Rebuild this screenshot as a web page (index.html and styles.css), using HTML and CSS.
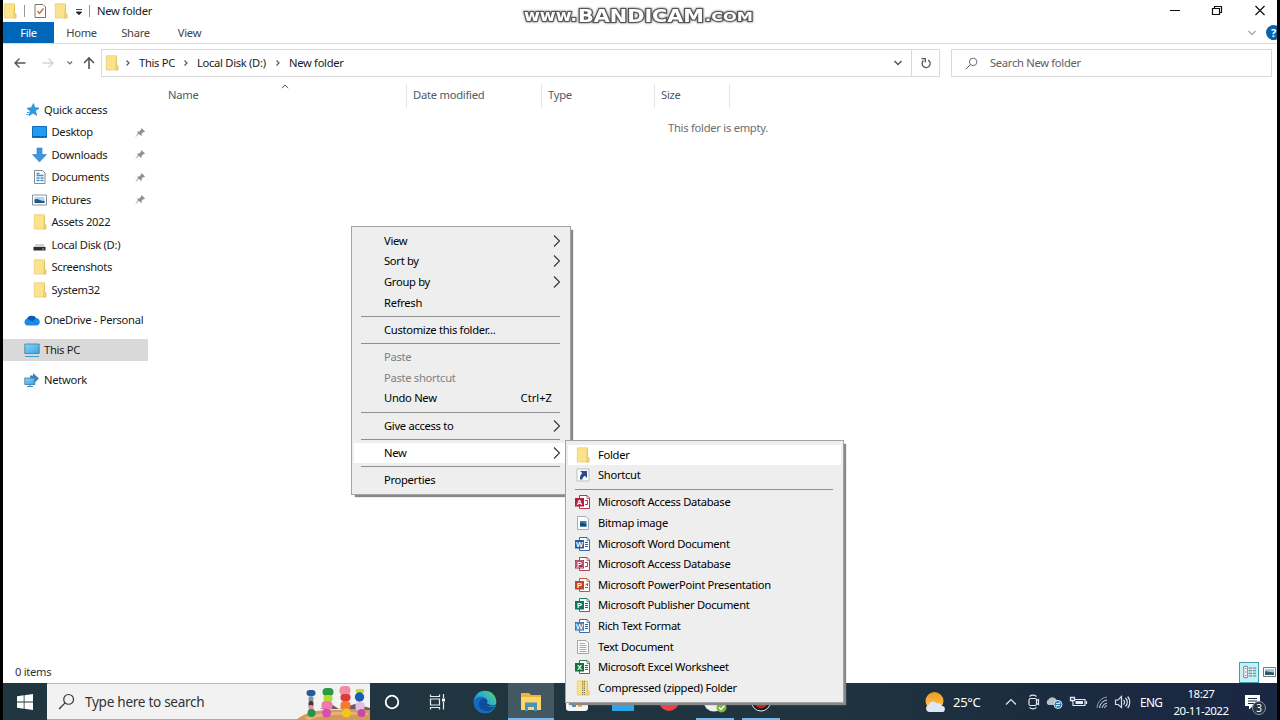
FILE: index.html
```html
<!doctype html>
<html lang="en">
<head>
    <meta charset="UTF-8">
    <meta name="viewport" content="width=device-width, initial-scale=1.0">
    <title>New folder</title>
    <link rel="stylesheet" href="styles.css">
</head>
<body>
<!-- shared icons -->
<svg class="defs">
    <defs>
        <linearGradient id="edge-a" x1="0" y1="1" x2="1" y2="0">
            <stop offset="0" stop-color="#1273c8"/>
            <stop offset=".5" stop-color="#22a5df"/>
            <stop offset="1" stop-color="#5fd96a"/>
        </linearGradient>
        <linearGradient id="sun" x1="0" y1="0" x2="0" y2="1">
            <stop offset="0" stop-color="#f39a1e"/>
            <stop offset="1" stop-color="#fcc95a"/>
        </linearGradient>
        <linearGradient id="screen" x1="0" y1="0" x2="1" y2="1">
            <stop offset="0" stop-color="#8bd4f7"/>
            <stop offset="1" stop-color="#3aa4dd"/>
        </linearGradient>
    </defs>
    <symbol id="folder" viewBox="0 0 16 16">
        <path d="M2.300 .8h10.200v8.700l1.500 1.500v4h-11.700z" fill="#fbe38e" stroke="#e6c968" stroke-width=".7"/>
        <path d="M11.500 15l1-13v8L14 11v4z" fill="#f1d473" stroke="#dfbd55" stroke-width=".5"/>
    </symbol>
    <symbol id="arrow" viewBox="0 0 8 12">
        <path d="M1 .5l5.500 5.500L1 11.500" fill="none" stroke="#333" stroke-width="1.100"/>
    </symbol>
    <symbol id="chev" viewBox="0 0 8 8">
        <path d="M2.500 1.500L5 4 2.500 6.500" fill="none" stroke="#555" stroke-width="1.200"/>
    </symbol>
    <symbol id="down" viewBox="0 0 10 8">
        <path d="M1.500 2L5 5.500 8.500 2" fill="none" stroke="currentColor" stroke-width="1.500"/>
    </symbol>
    <symbol id="pin" viewBox="0 0 12 12">
        <path d="M7 1l4 4-1.200.6-1 .1-1.500 1.700-.2 2.300L5.800 9 4 7.300.8 11l-.2-.3L3.300 6.500 2 5.200l2.600-.4L6.400 3.200z" fill="#8d9196"/>
    </symbol>
    <symbol id="lens" viewBox="0 0 16 16">
        <circle cx="10" cy="6" r="4.600" fill="none" stroke="currentColor" stroke-width="1.100"/>
        <path d="M6.700 9.300L1 15" stroke="currentColor" stroke-width="1.200"/>
    </symbol>
    <symbol id="office" viewBox="0 0 16 16">
        <path d="M4.500 1.500h7.500l2.500 2.500v10.500h-10z" fill="#fff" stroke="currentColor" stroke-width=".9"/>
        <path d="M12 1.500v3h3" fill="none" stroke="currentColor" stroke-width=".6"/>
        <path d="M0 4h9v8.500H0z" fill="currentColor"/>
    </symbol>
    <symbol id="lines" viewBox="0 0 16 16">
        <path d="M10 6.500h3M10 8.500h3M10 10.500h3" stroke="currentColor"/>
    </symbol>
    <symbol id="db" viewBox="0 0 16 16">
        <path d="M10 6.500h2.500v4H10" fill="none" stroke="currentColor" stroke-width=".9"/>
    </symbol>
</svg>

<div class="desktop">
    <div class="window">
        <div class="titlebar">
            <svg class="i16"><use href="#folder"/></svg>
            <span class="bar"></span>
            <svg class="i16 check" viewBox="0 0 16 16">
                <path d="M3 1.500h8l2.500 2.500v10.500H3z" fill="#fff" stroke="#777"/>
                <path d="M5.500 8l2 2.500 4-5" fill="none" stroke="#d2692c" stroke-width="1.400"/>
            </svg>
            <svg class="i16"><use href="#folder"/></svg>
            <svg class="drop" viewBox="0 0 8 8"><path d="M1 1.500h6M1.200 4h5.600L4 6.800z" fill="#222" stroke="#222" stroke-width=".8"/></svg>
            <span class="bar"></span>
            <span class="title">New folder</span>
            <svg class="controls" viewBox="0 0 100 16">
                <path d="M5 8.500h10" stroke="#111"/>
                <path d="M47.500 6.500h7v6h-7zM49.500 6V4.500h7v6H55" fill="none" stroke="#111" stroke-width="1.200"/>
                <path d="M90.500 4l9 9M99.500 4l-9 9" stroke="#111" stroke-width="1.200"/>
            </svg>
        </div>

        <div class="ribbon">
            <span class="tab file">File</span>
            <span class="tab">Home</span>
            <span class="tab">Share</span>
            <span class="tab">View</span>
            <svg class="collapse"><use href="#down"/></svg>
            <span class="help">?</span>
        </div>

        <div class="nav">
            <svg class="nav-arrows" viewBox="0 0 84 16">
                <path d="M12.500 8H2M6.500 3.500L2 8l4.500 4.500" fill="none" stroke="#555" stroke-width="1.400"/>
                <path d="M29.500 8H40M35.500 3.500L40 8l-4.500 4.500" fill="none" stroke="#d4d4d4" stroke-width="1.300"/>
                <path d="M54.500 6.500l2.300 2.300 2.300-2.300" fill="none" stroke="#666" stroke-width="1.200"/>
                <path d="M76 14V3M71 8l5-5 5 5" fill="none" stroke="#555" stroke-width="1.600"/>
            </svg>
            <div class="address">
                <svg class="i16"><use href="#folder"/></svg>
                <svg class="sep"><use href="#chev"/></svg>
                <span class="crumb pc">This PC</span>
                <svg class="sep"><use href="#chev"/></svg>
                <span class="crumb disk">Local Disk (D:)</span>
                <svg class="sep"><use href="#chev"/></svg>
                <span class="crumb">New folder</span>
                <svg class="more"><use href="#down"/></svg>
                <div class="refresh">
                    <svg viewBox="0 0 14 14"><path d="M9.500 3.600A4.700 4.700 0 1 1 4 4.200M1.800 2h4.400v4.400" fill="none" stroke="#555" stroke-width="1.500"/></svg>
                </div>
            </div>
            <div class="search">
                <svg><use href="#lens"/></svg>
                <span>Search New folder</span>
            </div>
        </div>

        <div class="main">
            <div class="sidebar">
                <div class="group">
                    <div class="item root">
                        <svg viewBox="0 0 16 16"><path d="M9.500 1.500l1.300 4.200 4.200.3-3.500 2.800 1.200 4.700-3.700-2.500-4 2.800 1.300-4.900L3 6.300l4.200-.6z" fill="#2b9be8" stroke="#1879c4" stroke-width=".6"/><path d="M3 10.500h2M2.500 12.500h2" stroke="#2b9be8"/></svg>
                        <span>Quick access</span>
                    </div>
                    <div class="item">
                        <svg viewBox="0 0 16 16"><path d="M.5 2.500h14v11H.5z" fill="#1f9df5" stroke="#0f6db9"/><path d="M.5 12.500h14" stroke="#0b4f8e" stroke-dasharray="2 1"/></svg>
                        <span>Desktop</span><svg class="pin"><use href="#pin"/></svg>
                    </div>
                    <div class="item">
                        <svg viewBox="0 0 16 16"><path d="M5 1h5v6.500h4.500l-7 7.500-7-7.500H5z" fill="#3c97e2" stroke="#2b7cc4" stroke-width=".6"/></svg>
                        <span>Downloads</span><svg class="pin"><use href="#pin"/></svg>
                    </div>
                    <div class="item">
                        <svg viewBox="0 0 16 16"><path d="M2.500 1.500h8l2.500 2.500v10.500H2.500z" fill="#fff" stroke="#83898f"/><path d="M4.500 4.500h3M4.500 6.500h7M4.500 9h3M8.500 9h3M4.500 11.500h3M8.500 11.500h3" stroke="#3c8fcc" stroke-width="1.300"/></svg>
                        <span>Documents</span><svg class="pin"><use href="#pin"/></svg>
                    </div>
                    <div class="item">
                        <svg viewBox="0 0 16 16"><path d="M.5 3h14v10H.5z" fill="#fff" stroke="#8a9299"/><path d="M2.500 5h10v6h-10z" fill="#a9d8f5"/><path d="M2.500 7.500c3-2 5 1.500 10 1.500v2h-10z" fill="#23597f"/></svg>
                        <span>Pictures</span><svg class="pin"><use href="#pin"/></svg>
                    </div>
                    <div class="item"><svg><use href="#folder"/></svg><span>Assets 2022</span></div>
                    <div class="item">
                        <svg viewBox="0 0 16 16"><path d="M4 7h7.500l2 3.500h-12z" fill="#d2d2d2"/><path d="M1.500 10h12v3.500h-12z" fill="#2c2c2c"/><path d="M10 12h2" stroke="#8fd36c"/></svg>
                        <span>Local Disk (D:)</span>
                    </div>
                    <div class="item"><svg><use href="#folder"/></svg><span>Screenshots</span></div>
                    <div class="item"><svg><use href="#folder"/></svg><span>System32</span></div>
                </div>
                <div class="group">
                    <div class="item root">
                        <svg viewBox="0 0 16 16"><path d="M3.500 13.500a3.600 3.600 0 0 1-.5-7A5.200 5.200 0 0 1 12 6a3.800 3.800 0 0 1 .8 7.500z" fill="#1a8ae4"/><path d="M3 6.500A5.200 5.200 0 0 1 12 6L8.500 9.500z" fill="#0a5cb3"/></svg>
                        <span>OneDrive - Personal</span>
                    </div>
                </div>
                <div class="group">
                    <div class="item root selected">
                        <svg viewBox="0 0 16 16"><path d="M.8 2h14.400v9.500H.8z" fill="url(#screen)" stroke="#3d7ea6" stroke-width=".8"/><path d="M1 14.500h14" stroke="#3d9bd0"/></svg>
                        <span>This PC</span>
                    </div>
                </div>
                <div class="group">
                    <div class="item root">
                        <svg viewBox="0 0 16 16"><path d="M6 5V3.500h3V1l6 5.500-6 5.500z" fill="#3f86b5"/><path d="M.8 6h10v6.500H.8z" fill="url(#screen)" stroke="#2f78a8" stroke-width=".8"/><path d="M3 14.500h6M6 12.500v2" stroke="#4388b2"/></svg>
                        <span>Network</span>
                    </div>
                </div>
            </div>
            <div class="files">
                <div class="columns">
                    <div class="col name">Name<svg class="sort" viewBox="0 0 8 5"><path d="M.8 4L4 1l3.200 3" fill="none" stroke="#555"/></svg></div>
                    <div class="col date">Date modified</div>
                    <div class="col type">Type</div>
                    <div class="col size">Size</div>
                </div>
                <p class="empty">This folder is empty.</p>
            </div>
        </div>

        <div class="status">
            <span>0 items</span>
            <div class="view-btn">
                <svg viewBox="0 0 16 16"><path d="M1.500 1.500h4v13h-4z" fill="#fff" stroke="#678"/><path d="M3 4h1M3 8h1M3 12h1" stroke="#356"/><path d="M7 3.500h4M12 3.500h3.500M7 6.500h4M12 6.500h3.500M7 9.500h4M12 9.500h3.500M7 12.500h4M12 12.500h3.500" stroke="#567"/></svg>
            </div>
            <svg class="thumbs" viewBox="0 0 13 11"><path d="M.5.5h12v9H.5z" fill="#fff" stroke="#777"/><path d="M2 2h9v6H2z" fill="#9ccbe4"/><path d="M2 4.500c3-1 5 1 9 1V8H2z" fill="#2d586f"/></svg>
        </div>
    </div>

    <div class="taskbar">
        <div class="start">
            <svg viewBox="0 0 16 16"><path d="M0 2.300l6.700-1v6.300H0zM7.500 1.200L16 0v7.600H7.500zM0 8.400h6.700v6.300l-6.700-1zM7.500 8.400H16V16l-8.500-1.200z" fill="#fff"/></svg>
        </div>
        <div class="task-search">
            <svg class="lens"><use href="#lens"/></svg>
            <span>Type here to search</span>
            <!-- daily doodle -->
            <svg class="doodle" viewBox="0 0 74 37">
                <path d="M0 37c5-4 12-8 20-9 14-2 36-1 54-2v11z" fill="#d39a5c"/>
                <path d="M24 26l11-5 8 5zM43 26l16-5 15 4v2z" fill="#6b5a68"/>
                <path d="M8 35c18-8 44-6 64-5v2c-22-1-44-1-59 5z" fill="#e5b577"/>
                <g transform="translate(3.500 0)">
                    <rect x="7" y="7" width="9" height="6" rx="3" fill="#245a9c"/>
                    <rect x="9" y="13" width="5" height="6" rx="2" fill="#8695a5"/>
                    <rect x="9" y="18" width="5" height="6" rx="2" fill="#49373f"/>
                    <rect x="9" y="22" width="5" height="6" rx="2" fill="#e98d9d"/>
                    <circle cx="12" cy="30" r="4" fill="#27924c"/>
                    <rect x="23" y="5" width="11" height="8" rx="4" fill="#289b43"/>
                    <rect x="24" y="12" width="9" height="7" rx="3" fill="#b5d832"/>
                    <rect x="22" y="18" width="11" height="9" rx="4" fill="#ef7cae"/>
                    <circle cx="27" cy="30" r="4.500" fill="#d84fb1"/>
                    <rect x="40" y="3" width="11" height="9" rx="4" fill="#f18da0"/>
                    <rect x="41" y="11" width="10" height="7" rx="3" fill="#d63d3c"/>
                    <rect x="41" y="18" width="10" height="9" rx="4" fill="#f47a2c"/>
                    <circle cx="47" cy="30" r="4.500" fill="#f0c61f"/>
                    <rect x="56" y="6" width="9" height="4" rx="2" fill="#c4d83c"/>
                    <circle cx="60" cy="14" r="4.700" fill="#175fae"/>
                    <rect x="56" y="19" width="9" height="9" rx="3" fill="#e7bddf"/>
                    <circle cx="62" cy="30" r="4" fill="#c747af"/>
                </g>
            </svg>
        </div>
        <div class="apps">
            <div class="app"><svg viewBox="0 0 24 24"><circle cx="11" cy="12" r="6.300" fill="none" stroke="#fff" stroke-width="1.800"/></svg></div>
            <div class="app"><svg viewBox="0 0 24 24"><path d="M3.500 4.500v2h9v-2M3.500 19.500v-2h9v2M3.500 9h9v6h-9zM16.500 4v4M16.500 12v7.500" fill="none" stroke="#e8edef" stroke-width="1.200"/><path d="M15 8.500h3v3h-3z" fill="#fff"/></svg></div>
            <div class="app">
                <svg viewBox="0 0 24 24">
                    <circle cx="12" cy="12" r="11.300" fill="url(#edge-a)"/>
                    <path d="M.8 11C3 5.500 13 5 14.500 11c.3 1.500-1.200 2-1 3.500.5 3 6 3.500 9 1.500A11.300 11.300 0 0 1 .8 11z" fill="#1669bd"/>
                    <path d="M6 14c0-4 3-6 6.500-5 2.500 1 2 3 1 4-.7 3 3.500 5 8.500 3.500-3 5-8 5-11 4-3-1-5-3-5-6.500z" fill="#0e4b9c"/>
                    <path d="M13.500 13c-.5 3 5 4.500 9 2.500l1.500-2c-2.500 2.500-6 2.500-8 1z" fill="#22383f"/>
                </svg>
            </div>
            <div class="app active">
                <svg viewBox="0 0 24 24"><path d="M2 4h8l2 2h10v15H2z" fill="#eeb43a"/><path d="M2 8h20v13H2z" fill="#fcd666"/><path d="M6 13.500h12V22h-3v-4H9v4H6z" fill="#4c92b8"/></svg>
            </div>
            <div class="app"><svg viewBox="0 0 24 24"><rect x="1" y="1" width="22" height="20" rx="3" fill="#f5f5f5"/><path d="M7 8h4v4H7z" fill="#3c8fd0"/><path d="M13 8h4v4h-4z" fill="#f2b632"/><path d="M7 13h4v4H7z" fill="#2da0dc"/><path d="M13 13h4v4h-4z" fill="#f2b632"/></svg></div>
            <div class="app"><svg viewBox="0 0 24 24"><path d="M1 3h22v18H1z" fill="#2ca5e8"/><path d="M1 3l11 9 11-9z" fill="#1673ba"/></svg></div>
            <div class="app"><svg viewBox="0 0 24 24"><circle cx="12" cy="11" r="10" fill="#ef3f4c"/><path d="M6 3l9 2 3 6-4 4-5-3z" fill="#f0573f"/></svg></div>
            <div class="app open"><svg viewBox="0 0 24 24"><circle cx="11" cy="11" r="10.500" fill="#eee"/><path d="M4 6h14v9H4z" fill="#5056a8"/><circle cx="18.500" cy="17.500" r="5" fill="#7db93c"/><path d="M16 17.500l2 2 3.500-4" fill="none" stroke="#fff" stroke-width="1.300"/></svg></div>
            <div class="app open"><svg viewBox="0 0 24 24"><circle cx="12" cy="11.500" r="9.500" fill="#161616" stroke="#eee"/><circle cx="12" cy="12" r="6.500" fill="#c51d25"/></svg></div>
        </div>
        <div class="tray">
            <svg class="weather" viewBox="0 0 22 22"><circle cx="10.500" cy="10" r="9" fill="url(#sun)"/><path d="M5 21a3.800 3.800 0 0 1-.3-7.300 4.500 4.500 0 0 1 8-1.300A4 4 0 0 1 18 15a3 3 0 0 1-.3 6z" fill="#dfe6f5"/></svg>
            <span class="temp">25°C</span>
            <svg class="tray-icons" viewBox="0 0 128 20">
                <g fill="none" stroke="#e4e9ef" stroke-width="1.200">
                    <path d="M1 12.500L6 7.500l5 5"/>
                    <rect x="24" y="6.500" width="7.500" height="7" rx="1.500"/>
                    <path d="M31.500 8.500l2-1v5l-2-1M24.500 4.500c2-1.500 5-1.500 7 0M24.500 15.500c2 1.500 5 1.500 7 0"/>
                    <path d="M69 7.500h11v6H68v-3M81.500 9v3"/>
                    <path d="M65.500 5.500h4v3h-4zM67.500 8.500v2" stroke-width="1.300"/>
                </g>
                <path d="M70.500 9H78v3h-7.500z" fill="#e4e9ef"/>
                <path d="M43.500 13a3 3 0 0 1 0-5.500 4.500 4.500 0 0 1 8 .2 3 3 0 0 1 1 5.300z" fill="#b9c2cc"/>
                <circle cx="53" cy="12.500" r="4" fill="#2578a8" stroke="#d8e8f0"/>
                <path d="M51 11.500h4l-1-1.300M55 13.500h-4l1 1.300" fill="none" stroke="#fff" stroke-width=".8"/>
                <g fill="none" stroke="#d9dfe6">
                    <path d="M92 16A11 11 0 0 1 102 5" stroke="#8e9aa8"/>
                    <path d="M94.500 16A8.500 8.500 0 0 1 102 8M97 16a6 6 0 0 1 5-5M99.500 16a3 3 0 0 1 2.500-2.500"/>
                    <path d="M110.500 8h2.500l3.500-3.500v11L113 12.500h-2.500z" stroke-width="1.200"/>
                    <path d="M118.500 8a3 3 0 0 1 0 4.500M120.500 6a6 6 0 0 1 0 8.500M122.700 4.500a9 9 0 0 1 0 11.500" stroke-width="1.200"/>
                </g>
            </svg>
            <span class="lang">ENG</span>
            <div class="clock"><span>18:27</span><span>20-11-2022</span></div>
            <div class="notify">
                <svg viewBox="0 0 16 16"><path d="M0 1h15v11H8l-4 3.500V12H0z" fill="#fff"/><path d="M3 4.500h9M3 7h9M3 9.500h6" stroke="#1c2a40"/></svg>
                <span class="badge">3</span>
            </div>
        </div>
    </div>

    <div class="menu context">
        <div class="entry">View<svg class="arrow"><use href="#arrow"/></svg></div>
        <div class="entry">Sort by<svg class="arrow"><use href="#arrow"/></svg></div>
        <div class="entry">Group by<svg class="arrow"><use href="#arrow"/></svg></div>
        <div class="entry">Refresh</div>
        <hr>
        <div class="entry">Customize this folder...</div>
        <hr>
        <div class="entry disabled">Paste</div>
        <div class="entry disabled">Paste shortcut</div>
        <div class="entry">Undo New<span class="key">Ctrl+Z</span></div>
        <hr>
        <div class="entry">Give access to<svg class="arrow"><use href="#arrow"/></svg></div>
        <hr>
        <div class="entry hover">New<svg class="arrow"><use href="#arrow"/></svg></div>
        <hr>
        <div class="entry">Properties</div>
    </div>

    <div class="menu submenu">
        <div class="entry hover"><svg class="i16"><use href="#folder"/></svg>Folder</div>
        <div class="entry"><svg class="i16" viewBox="0 0 16 16"><path d="M2 2h12v12H2z" fill="#fff" stroke="#b5bfc9"/><path d="M5 4h7v7l-2.300-2.300C8 10 7.500 11 7.500 12.500H5C4.700 9.500 5.500 8 7.300 6.300z" fill="#2c4a8c"/></svg>Shortcut</div>
        <hr>
        <div class="entry"><svg class="i16 access" viewBox="0 0 16 16"><use href="#office"/><use href="#db"/><text x="4.500" y="11">A</text></svg>Microsoft Access Database</div>
        <div class="entry"><svg class="i16" viewBox="0 0 16 16"><path d="M2.500 1.500h8.500l2.500 2.500v10.500h-11z" fill="#fff" stroke="#a6adb3"/><path d="M5 6h6.500v5.500H5z" fill="#2f86bd"/><path d="M5 8.500l2-1 4.500 2v2H5z" fill="#17496d"/></svg>Bitmap image</div>
        <div class="entry"><svg class="i16 word" viewBox="0 0 16 16"><use href="#office"/><use href="#lines"/><text x="4.500" y="11">W</text></svg>Microsoft Word Document</div>
        <div class="entry"><svg class="i16 access-old" viewBox="0 0 16 16"><use href="#office"/><use href="#db"/><path d="M1 5h7v6.500H1z" fill="none" stroke="#fff" stroke-width=".4"/><text x="4.500" y="11">P</text></svg>Microsoft Access Database</div>
        <div class="entry"><svg class="i16 ppt" viewBox="0 0 16 16"><use href="#office"/><path d="M10 10.500h3M10.500 8l2-1.500v2.500" stroke="currentColor" fill="none"/><text x="4.500" y="11">P</text></svg>Microsoft PowerPoint Presentation</div>
        <div class="entry"><svg class="i16 pub" viewBox="0 0 16 16"><use href="#office"/><use href="#lines"/><text x="4.500" y="11">P</text></svg>Microsoft Publisher Document</div>
        <div class="entry"><svg class="i16 word" viewBox="0 0 16 16"><use href="#office"/><use href="#lines"/><path d="M1 5h7v6.500H1z" fill="none" stroke="#fff" stroke-width=".4"/><text x="4.500" y="11">W</text></svg>Rich Text Format</div>
        <div class="entry"><svg class="i16" viewBox="0 0 16 16"><path d="M2.500 1.500h8.500l2.500 2.500v10.500h-11z" fill="#fbfbfb" stroke="#a6a6a6"/><path d="M4.500 4.500H10M4.500 6.500h7M4.500 8.500h7M4.500 10.500h7M4.500 12.500h7" stroke="#a9a9a9"/></svg>Text Document</div>
        <div class="entry"><svg class="i16 excel" viewBox="0 0 16 16"><use href="#office"/><use href="#lines"/><text x="4.500" y="11">X</text></svg>Microsoft Excel Worksheet</div>
        <div class="entry"><svg class="i16" viewBox="0 0 16 16"><use href="#folder"/><path d="M8.500 1v14" stroke="#77705c" stroke-width="3" stroke-dasharray="1.200 1"/><path d="M8.500 1v14" stroke="#d8cd9b" stroke-width="1"/></svg>Compressed (zipped) Folder</div>
    </div>

    <svg class="watermark" viewBox="0 0 240 28">
        <text x="5" y="21" font-size="16.500" textLength="53" lengthAdjust="spacingAndGlyphs">www.</text>
        <text x="59" y="21.500" font-size="17.500" textLength="126" lengthAdjust="spacingAndGlyphs">BANDICAM</text>
        <text class="caps" x="186" y="21" font-size="13" textLength="48" lengthAdjust="spacingAndGlyphs">.com</text>
    </svg>
</div>
</body>
</html>
```
FILE: styles.css
```css
* {
    padding: 0;
    margin: 0;
    box-sizing: border-box;
}
body {
    width: 1280px;
    height: 720px;
    overflow: hidden;
    background: #000;
    font-family: "Noto Sans", "Open Sans", sans-serif;
    font-size: 11.2px;
    letter-spacing: -0.3px;
    line-height: 16px;
    color: #1a1a1a;
    white-space: nowrap;
}
svg {
    display: block;
    flex: none;
}
.defs {
    position: absolute;
    width: 0;
    height: 0;
}
.i16 {
    width: 16px;
    height: 16px;
}
.desktop {
    height: 720px;
    padding: 0 3px;
    display: flex;
    flex-direction: column;
    position: relative;
}
.window {
    height: 683px;
    background: #fff;
    display: flex;
    flex-direction: column;
}

/* title bar */
.titlebar {
    height: 22px;
    display: flex;
    align-items: center;
    overflow: hidden;
}
.titlebar .i16:first-child {
    margin-left: -1px;
}
.titlebar .bar {
    width: 1px;
    height: 12px;
    margin-left: 6px;
    background: #999;
}
.titlebar .check {
    margin: 0 5px 0 7px;
}
.titlebar .drop {
    width: 8px;
    height: 8px;
    margin: 2px 0 0 6px;
}
.titlebar .title {
    margin-left: 7px;
    letter-spacing: -0.25px;
}
.controls {
    width: 100px;
    height: 16px;
    margin: -2px 12px 0 auto;
}

/* ribbon */
.ribbon {
    height: 22px;
    border-bottom: 1px solid #dadbdc;
    display: flex;
    align-items: center;
    overflow: hidden;
}
.tab {
    width: 54px;
    padding-left: 1px;
    color: #444;
    text-align: center;
}
.tab.file {
    width: 51px;
    height: 21px;
    padding: 0;
    line-height: 21px;
    color: #fff;
    background: #0067b8;
}
.collapse {
    width: 10px;
    height: 8px;
    margin-left: auto;
    color: #aaa;
}
.help {
    width: 15px;
    height: 15px;
    margin: 0 -4px 0 9px;
    border-radius: 50%;
    background: #0a64ad;
    color: #fff;
    font-weight: bold;
    font-size: 11px;
    line-height: 15px;
    text-align: center;
}

/* address row */
.nav {
    height: 38px;
    display: flex;
    align-items: center;
}
.nav-arrows {
    width: 84px;
    height: 16px;
    margin: 0 4px 0 10px;
}
.address,.search {
    height: 28px;
    border: 1px solid #d9d9d9;
    display: flex;
    align-items: center;
}
.address {
    width: 839px;
    padding-left: 2px;
}
.address .sep {
    width: 8px;
    height: 8px;
    margin-left: 5px;
}
.address .i16 + .sep {
    margin-left: 4px;
}
.crumb {
    margin-left: 7px;
}
.crumb.pc {
    width: 38px;
}
.crumb.disk {
    width: 72px;
}
.more {
    width: 10px;
    height: 8px;
    margin-left: auto;
    margin-right: 8px;
    color: #555;
}
.refresh {
    width: 28px;
    height: 26px;
    border-left: 1px solid #d9d9d9;
    display: flex;
    align-items: center;
    justify-content: center;
}
.refresh svg {
    width: 12px;
    height: 12px;
}
.search {
    width: 321px;
    margin-left: 11px;
    padding-left: 13px;
    gap: 12px;
    color: #606060;
    letter-spacing: -0.3px;
}
.search svg {
    width: 13px;
    height: 13px;
}

/* sidebar */
.main {
    height: 579px;
    display: flex;
}
.sidebar {
    flex: none;
    width: 145px;
    padding-top: 16.500px;
}
.group {
    margin-bottom: 7.500px;
}
.item {
    height: 22.500px;
    padding-left: 29px;
    display: flex;
    align-items: center;
    gap: 3.500px;
}
.item svg {
    width: 16px;
    height: 16px;
}
.item.root {
    padding-left: 21px;
    gap: 4px;
}
.item.selected {
    background: #d9d9d9;
}
.item .pin {
    width: 11px;
    height: 11px;
    margin-left: auto;
    margin-right: 2px;
}

/* file list */
.files {
    flex: 1;
    padding-left: 1px;
}
.columns {
    height: 27px;
    padding-left: 12px;
    display: flex;
    color: #4c5a67;
    letter-spacing: -0.25px;
}
.col {
    height: 24px;
    margin-top: 2px;
    padding-left: 6px;
    line-height: 22px;
    border-right: 1px solid #e5e5e5;
    position: relative;
}
.col.name {
    width: 246px;
    padding-left: 7px;
}
.col.date {
    width: 135px;
}
.col.type {
    width: 113px;
}
.col.size {
    width: 75px;
}
.sort {
    width: 8px;
    height: 5px;
    position: absolute;
    left: 120px;
    top: 0;
}
.empty {
    width: 1138px;
    margin-top: 11px;
    color: #6d6d6d;
    text-align: center;
    letter-spacing: -0.27px;
}

/* status bar */
.status {
    height: 22px;
    padding-left: 12px;
    display: flex;
    align-items: center;
    overflow: hidden;
    color: #333;
}
.view-btn {
    width: 20px;
    height: 21px;
    margin-left: auto;
    border: 1px solid #3aa0ad;
    background: #c9eef5;
    display: flex;
    align-items: center;
    justify-content: center;
}
.view-btn svg {
    width: 15px;
    height: 14px;
}
.thumbs {
    width: 13px;
    height: 11px;
    margin: 0 1px 0 4px;
}

/* taskbar */
.taskbar {
    height: 37px;
    background: linear-gradient(90deg, #213740 0, #1f343f 65%, #1a2a40 85%, #1a2743);
    display: flex;
    color: #fff;
}
.start {
    width: 44px;
    display: flex;
    align-items: center;
    justify-content: center;
}
.start svg {
    width: 16px;
    height: 16px;
    margin-left: -1px;
}
.task-search {
    width: 323px;
    padding-left: 11px;
    border-top: 1px solid #b8b8b8;
    border-bottom: 1px solid #aaa;
    background: #f3f2f2;
    color: #333;
    display: flex;
    align-items: center;
    gap: 10px;
    font-size: 13.6px;
    letter-spacing: -0.3px;
}
.task-search .lens {
    width: 17px;
    height: 17px;
}
.doodle {
    width: 74px;
    height: 37px;
    margin-left: auto;
}
.apps {
    display: flex;
}
.app {
    width: 46px;
    height: 37px;
    display: flex;
    align-items: center;
    justify-content: center;
}
.app svg {
    width: 24px;
    height: 24px;
}
.app.active {
    background: #445862;
    border-bottom: 2px solid #76b9ed;
}
.app.open::after {
    content: "";
    width: 38px;
    height: 2px;
    background: #76b9ed;
    align-self: flex-end;
    margin-left: -31px;
    margin-right: -7px;
}
.tray {
    flex: 1;
    display: flex;
    align-items: center;
    font-size: 11.8px;
}
.weather {
    width: 22px;
    height: 22px;
    margin-left: 140px;
}
.temp {
    width: 47px;
    margin-left: 7px;
    font-size: 13px;
}
.tray-icons {
    width: 128px;
    height: 20px;
    margin-left: 5px;
}
.lang {
    width: 24px;
    margin-left: 7px;
    letter-spacing: -0.6px;
}
.clock {
    width: 60px;
    margin-left: 7px;
    display: flex;
    flex-direction: column;
    text-align: center;
    line-height: 17px;
    font-size: 11.5px;
    letter-spacing: -0.5px;
}
.notify {
    margin-left: 14px;
    position: relative;
}
.notify svg {
    width: 16px;
    height: 16px;
}
.badge {
    width: 14px;
    height: 14px;
    border: 1px solid #8b939d;
    border-radius: 50%;
    background: #2a3341;
    font-size: 10px;
    line-height: 12px;
    text-align: center;
    position: absolute;
    left: 7px;
    top: 7px;
}

/* menus */
.menu {
    position: absolute;
    padding: 3.500px 2px;
    background: #eee;
    border: 1px solid #a3a3a3;
    box-shadow: 3px 3px 1px -1px #888;
    color: #000;
    letter-spacing: -0.3px;
}
.context {
    left: 351px;
    top: 226px;
    width: 220px;
}
.submenu {
    left: 565px;
    top: 440px;
    width: 279px;
}
.entry {
    height: 20.600px;
    padding: 0 7px 0 30px;
    display: flex;
    align-items: center;
}
.submenu .entry {
    padding-left: 7px;
}
.submenu .i16 {
    margin-right: 7px;
}
.entry.hover {
    background: #fff;
}
.entry.disabled {
    color: #808080;
}
.entry .arrow {
    width: 8px;
    height: 12px;
    margin-left: auto;
}
.entry .key {
    margin-left: auto;
    margin-right: 9px;
    letter-spacing: 0;
}
.menu hr {
    height: 6.700px;
    margin: 0 8px 0 7px;
    border: 0;
    background: linear-gradient(#8f8f8f, #8f8f8f) 0 3px / 100% 1px no-repeat;
}
.submenu hr {
    height: 6.500px;
}
.entry text {
    font: bold 7.500px "Liberation Sans", sans-serif;
    letter-spacing: 0;
    text-anchor: middle;
    fill: #fff;
}
.access {
    color: #b3203d;
}
.access-old {
    color: #a52850;
}
.word {
    color: #275ba5;
}
.ppt {
    color: #c1432a;
}
.pub {
    color: #0b7566;
}
.excel {
    color: #14713f;
}

/* recorder overlay */
.watermark {
    width: 240px;
    height: 28px;
    position: absolute;
    left: 519px;
    top: 0;
    filter: drop-shadow(0 0 1px #555);
}
.watermark text {
    font-family: "DejaVu Sans", sans-serif;
    font-weight: bold;
    letter-spacing: 0;
    fill: #fff;
    stroke: #555;
    stroke-width: 2px;
    paint-order: stroke;
}
.watermark .caps {
    text-transform: uppercase;
}
```
